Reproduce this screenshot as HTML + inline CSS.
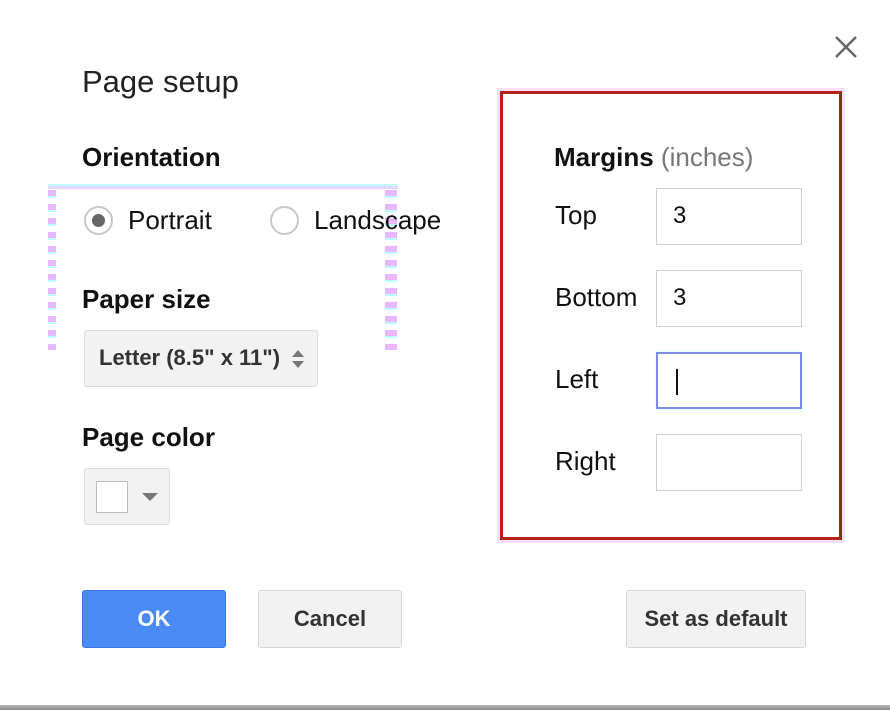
<!DOCTYPE html>
<html><head><style>
body{margin:0;width:890px;height:710px;background:#fff;position:relative;overflow:hidden;font-family:"Liberation Sans",Arial,sans-serif;color:#222}
.a{position:absolute;white-space:nowrap}
.h{font-weight:bold;font-size:26px;color:#111}
.t{font-size:26px;color:#111}
.in{position:absolute;width:146px;height:57px;border:1px solid #d0d0d0;box-sizing:border-box;font-size:24px;padding:13px 0 0 16px;color:#111}
.btn{position:absolute;box-sizing:border-box;height:58px;border:1px solid #d6d6d6;border-radius:3px;background:#f2f2f2;font-weight:bold;font-size:22px;color:#333;text-align:center;line-height:56px}
.dash{position:absolute;background:repeating-linear-gradient(#e8b8ff 0 6px,#bff 6px 8px,transparent 8px 14px)}
</style></head><body>
<svg class="a" style="left:834px;top:35px" width="24" height="24"><path d="M2 2L22 22M22 2L2 22" stroke="#666" stroke-width="2.5"/></svg>
<div class="a" style="left:82px;top:64px;font-size:31px;color:#222">Page setup</div>
<div class="a h" style="left:82px;top:142px">Orientation</div>
<div class="a" style="left:48px;top:184px;width:350px;height:5px;background:linear-gradient(#bff,#f0c8ff)"></div>
<div class="dash" style="left:48px;top:190px;width:8px;height:160px"></div>
<div class="dash" style="left:385px;top:190px;width:12px;height:160px"></div>
<div class="a" style="left:84px;top:206px;width:29px;height:29px;border:2px solid #c8c8c8;border-radius:50%;box-sizing:border-box"></div>
<div class="a" style="left:92px;top:214px;width:13px;height:13px;background:#666;border-radius:50%"></div>
<div class="a t" style="left:128px;top:205px">Portrait</div>
<div class="a" style="left:270px;top:206px;width:29px;height:29px;border:2px solid #c8c8c8;border-radius:50%;box-sizing:border-box"></div>
<div class="a t" style="left:314px;top:205px">Landscape</div>
<div class="a h" style="left:82px;top:284px">Paper size</div>
<div class="a" style="left:84px;top:330px;width:234px;height:57px;background:#f2f2f2;border:1px solid #dcdcdc;border-radius:3px;box-sizing:border-box"></div>
<div class="a" style="left:99px;top:345px;font-weight:bold;font-size:22px;color:#333">Letter (8.5" x 11")</div>
<svg class="a" style="left:290px;top:348px" width="16" height="22"><path d="M2 9L8 2L14 9Z M2 13L8 20L14 13Z" fill="#777"/></svg>
<div class="a h" style="left:82px;top:422px">Page color</div>
<div class="a" style="left:84px;top:468px;width:86px;height:57px;background:#f2f2f2;border:1px solid #dcdcdc;border-radius:3px;box-sizing:border-box"></div>
<div class="a" style="left:96px;top:481px;width:32px;height:32px;background:#fff;border:1px solid #bbb;box-sizing:border-box"></div>
<svg class="a" style="left:141px;top:492px" width="18" height="10"><path d="M1 1L17 1L9 9Z" fill="#777"/></svg>
<div class="a" style="left:497px;top:88px;width:348px;height:455px;background:#fadfff"></div>
<div class="a" style="left:500px;top:91px;width:342px;height:449px;background:#fff;border:3px solid #b42214;border-right-color:#7a3a10;box-sizing:border-box"></div>
<div class="a" style="left:554px;top:142px;font-size:26px"><b style="color:#111">Margins</b> <span style="color:#777">(inches)</span></div>
<div class="a t" style="left:555px;top:200px">Top</div>
<div class="in" style="left:656px;top:188px">3</div>
<div class="a t" style="left:555px;top:282px">Bottom</div>
<div class="in" style="left:656px;top:270px">3</div>
<div class="a t" style="left:555px;top:364px">Left</div>
<div class="in" style="left:656px;top:352px;border:2px solid #7c8ae8;box-shadow:0 0 3px #cfe"><div style="position:absolute;left:18px;top:15px;width:2px;height:26px;background:#111"></div></div>
<div class="a t" style="left:555px;top:446px">Right</div>
<div class="in" style="left:656px;top:434px"></div>
<div class="btn" style="left:82px;top:590px;width:144px;background:#4a8af4;border-color:#3b78e7;color:#fff">OK</div>
<div class="btn" style="left:258px;top:590px;width:144px">Cancel</div>
<div class="btn" style="left:626px;top:590px;width:180px">Set as default</div>
<div class="a" style="left:0;top:705px;width:890px;height:5px;background:linear-gradient(#bbb,#888)"></div>
</body></html>
